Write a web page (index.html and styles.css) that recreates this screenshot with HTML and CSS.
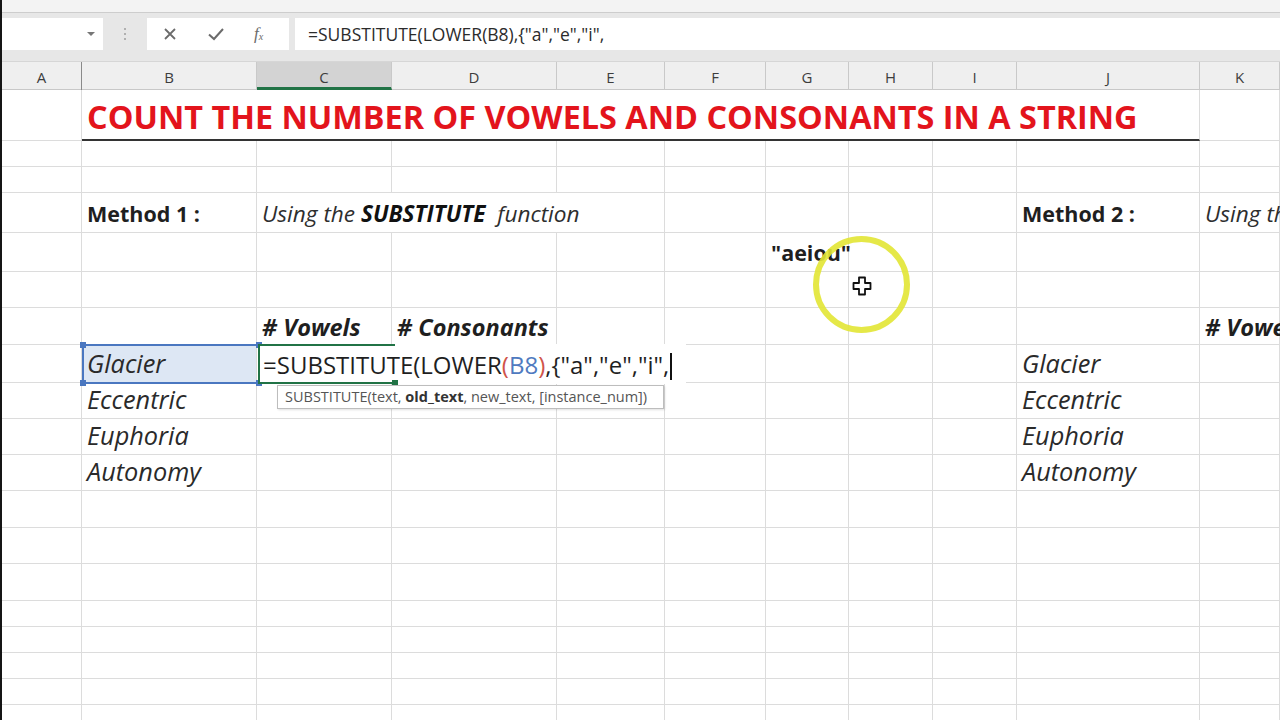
FILE: index.html
```html
<!DOCTYPE html>
<html>
<head>
<meta charset="utf-8">
<link rel="stylesheet" href="styles.css">
</head>
<body>
<div class="app">
  <div class="ribbon-edge"></div>
  <div class="formula-bar">
    <div class="name-box"><span class="caret-down"></span></div>
    <div class="fb-sep"><i></i><i></i><i></i></div>
    <div class="fb-buttons">
      <svg class="fb-icon" width="16" height="16" viewBox="0 0 16 16"><path d="M3 3 L13 13 M13 3 L3 13" stroke="#6b6b6b" stroke-width="1.8" fill="none"/></svg>
      <svg class="fb-icon" width="18" height="16" viewBox="0 0 18 16"><path d="M2 8.5 L7 13 L16 3" stroke="#6b6b6b" stroke-width="2" fill="none"/></svg>
      <span class="fx">f<sub>x</sub></span>
    </div>
    <div class="fb-input">=SUBSTITUTE(LOWER(B8),{"a","e","i",</div>
  </div>
  <div class="col-headers">
    <div class="ch">A</div><div class="ch">B</div><div class="ch active">C</div><div class="ch">D</div><div class="ch">E</div><div class="ch">F</div><div class="ch">G</div><div class="ch">H</div><div class="ch">I</div><div class="ch">J</div><div class="ch">K</div>
  </div>
  <div class="sheet">
    <!-- row 1 -->
    <div class="c"></div><div class="c title">COUNT THE NUMBER OF VOWELS AND CONSONANTS IN A STRING</div><div class="c"></div>
    <!-- row 2 -->
    <div class="c"></div><div class="c"></div><div class="c"></div><div class="c"></div><div class="c"></div><div class="c"></div><div class="c"></div><div class="c"></div><div class="c"></div><div class="c"></div><div class="c"></div>
    <!-- row 3 -->
    <div class="c"></div><div class="c"></div><div class="c"></div><div class="c"></div><div class="c"></div><div class="c"></div><div class="c"></div><div class="c"></div><div class="c"></div><div class="c"></div><div class="c"></div>
    <!-- row 4 -->
    <div class="c"></div><div class="c b">Method 1 :</div><div class="c u span3">Using the&nbsp; <b>SUBSTITUTE</b>&nbsp; function</div><div class="c"></div><div class="c"></div><div class="c"></div><div class="c"></div><div class="c b">Method 2 :</div><div class="c u">Using the&nbsp; <b>SUBSTITUTE</b></div>
    <!-- row 5 -->
    <div class="c"></div><div class="c"></div><div class="c"></div><div class="c"></div><div class="c"></div><div class="c"></div><div class="c b ov">"aeiou"</div><div class="c"></div><div class="c"></div><div class="c"></div><div class="c"></div>
    <!-- row 6 -->
    <div class="c"></div><div class="c"></div><div class="c"></div><div class="c"></div><div class="c"></div><div class="c"></div><div class="c"></div><div class="c"></div><div class="c"></div><div class="c"></div><div class="c"></div>
    <!-- row 7 -->
    <div class="c"></div><div class="c"></div><div class="c bi">#&nbsp;Vowels</div><div class="c bi">#&nbsp;Consonants</div><div class="c"></div><div class="c"></div><div class="c"></div><div class="c"></div><div class="c"></div><div class="c"></div><div class="c bi">#&nbsp;Vowels</div>
    <!-- row 8 -->
    <div class="c"></div><div class="c i sel">Glacier</div><div class="c"></div><div class="c"></div><div class="c"></div><div class="c"></div><div class="c"></div><div class="c"></div><div class="c"></div><div class="c i">Glacier</div><div class="c"></div>
    <!-- row 9 -->
    <div class="c"></div><div class="c i">Eccentric</div><div class="c"></div><div class="c"></div><div class="c"></div><div class="c"></div><div class="c"></div><div class="c"></div><div class="c"></div><div class="c i">Eccentric</div><div class="c"></div>
    <!-- row 10 -->
    <div class="c"></div><div class="c i">Euphoria</div><div class="c"></div><div class="c"></div><div class="c"></div><div class="c"></div><div class="c"></div><div class="c"></div><div class="c"></div><div class="c i">Euphoria</div><div class="c"></div>
    <!-- row 11 -->
    <div class="c"></div><div class="c i">Autonomy</div><div class="c"></div><div class="c"></div><div class="c"></div><div class="c"></div><div class="c"></div><div class="c"></div><div class="c"></div><div class="c i">Autonomy</div><div class="c"></div>
    <!-- rows 12-19 -->
    <div class="c"></div><div class="c"></div><div class="c"></div><div class="c"></div><div class="c"></div><div class="c"></div><div class="c"></div><div class="c"></div><div class="c"></div><div class="c"></div><div class="c"></div>
    <div class="c"></div><div class="c"></div><div class="c"></div><div class="c"></div><div class="c"></div><div class="c"></div><div class="c"></div><div class="c"></div><div class="c"></div><div class="c"></div><div class="c"></div>
    <div class="c"></div><div class="c"></div><div class="c"></div><div class="c"></div><div class="c"></div><div class="c"></div><div class="c"></div><div class="c"></div><div class="c"></div><div class="c"></div><div class="c"></div>
    <div class="c"></div><div class="c"></div><div class="c"></div><div class="c"></div><div class="c"></div><div class="c"></div><div class="c"></div><div class="c"></div><div class="c"></div><div class="c"></div><div class="c"></div>
    <div class="c"></div><div class="c"></div><div class="c"></div><div class="c"></div><div class="c"></div><div class="c"></div><div class="c"></div><div class="c"></div><div class="c"></div><div class="c"></div><div class="c"></div>
    <div class="c"></div><div class="c"></div><div class="c"></div><div class="c"></div><div class="c"></div><div class="c"></div><div class="c"></div><div class="c"></div><div class="c"></div><div class="c"></div><div class="c"></div>
    <div class="c"></div><div class="c"></div><div class="c"></div><div class="c"></div><div class="c"></div><div class="c"></div><div class="c"></div><div class="c"></div><div class="c"></div><div class="c"></div><div class="c"></div>
    <div class="c"></div><div class="c"></div><div class="c"></div><div class="c"></div><div class="c"></div><div class="c"></div><div class="c"></div><div class="c"></div><div class="c"></div><div class="c"></div><div class="c"></div>
  </div>

  <div class="sel-box"><i class="h tl"></i><i class="h tr"></i><i class="h bl"></i><i class="h br"></i></div>
  <div class="editor">
    <div class="editor-frame"><i class="fill-handle"></i></div>
    <span class="editor-text">=SUBSTITUTE(LOWER<span class="paren">(</span><span class="ref">B8</span><span class="paren">)</span>,{"a","e","i",<span class="caret"></span></span>
  </div>
  <div class="tooltip">SUBSTITUTE(text, <b>old_text</b>, new_text, [instance_num])</div>
  <div class="ring"></div>
  <svg class="cursor" width="20" height="20" viewBox="0 0 20 20"><path d="M7 1.5 H13 V7 H18.5 V13 H13 V18.5 H7 V13 H1.5 V7 H7 Z" fill="#fff" stroke="#111" stroke-width="1.8" stroke-linejoin="round"/></svg>
</div>
</body>
</html>
```

FILE: styles.css
```css
* { box-sizing: border-box; }
html, body { margin: 0; padding: 0; background: #fff; }
body { width: 1280px; height: 720px; overflow: hidden; font-family: "Open Sans", "Noto Sans", sans-serif; color: #1f1f1f; }

.app { position: relative; width: 1280px; height: 720px; overflow: hidden; border-left: 2px solid #151515; }

.ribbon-edge { height: 13px; background: #f3f3f3; border-bottom: 1px solid #cdcdcd; }

.formula-bar {
  height: 48px;
  background: #e7e7e7;
  display: flex;
  align-items: flex-start;
  padding-top: 5px;
}
.name-box {
  width: 101px; height: 32px; background: #fff;
  display: flex; align-items: center; justify-content: flex-end; padding-right: 8px;
}
.caret-down { width: 0; height: 0; border-left: 4px solid transparent; border-right: 4px solid transparent; border-top: 4px solid #777; }
.fb-sep { width: 44px; height: 32px; display: flex; flex-direction: column; align-items: center; justify-content: center; gap: 3px; }
.fb-sep i { width: 2px; height: 2px; background: #b0b0b0; display: block; }
.fb-buttons {
  width: 142px; height: 32px; background: #fff;
  display: flex; align-items: center; padding-left: 15px; gap: 29px;
}
.fx { font-family: "Liberation Serif", serif; font-style: italic; font-size: 17px; color: #6b6b6b; }
.fx sub { font-size: 10px; vertical-align: -1px; }
.fb-input {
  flex: 1; margin-left: 6px; height: 32px; background: #fff;
  font-size: 17.5px; color: #2b2b2b; padding-left: 13px; line-height: 32px;
}

.col-headers {
  height: 29px;
  background: #efefef;
  border-top: 1px solid #d6d6d6;
  border-bottom: 1px solid #c8c8c8;
  display: grid;
  grid-template-columns: 80px 175px 135px 165px 108px 101px 83px 84px 84px 183px 80px;
}
.ch {
  border-right: 1px solid #c9c9c9;
  display: flex; align-items: center; justify-content: center;
  font-size: 15px; color: #3d3d3d; padding-top: 2px;
}
.ch:first-child { border-right-color: #8a8a8a; }
.ch.active { background: #d3d3d3; border-bottom: 3px solid #217346; padding-top: 5px; }

.sheet {
  display: grid;
  grid-template-columns: 80px 175px 135px 165px 108px 101px 83px 84px 84px 183px 80px;
  grid-template-rows: 51px 26px 26px 40px 39px 36px 37px 38px 36px 36px 36px 37px 36px 37px 26px 26px 26px 26px 26px;
}
.c {
  border-right: 1px solid #dcdcdc;
  border-bottom: 1px solid #dcdcdc;
  display: flex; align-items: flex-end;
  padding: 0 0 5px 5px;
  font-size: 20px; line-height: 1.2;
  white-space: nowrap;
  min-width: 0;
}
.c.title {
  grid-column: span 9;
  border-bottom: 2px solid #333;
  color: #e3141c; font-weight: 700; font-size: 32.4px;
  padding-bottom: 3px; padding-left: 5px;
}
.c.span3 { grid-column: span 3; }
.c.b { font-weight: 700; font-size: 21.5px; }
.c.u { font-style: italic; color: #2e2e2e; font-size: 22.6px; }
.c.u b { font-weight: 700; color: #111; }
.c.i { font-style: italic; color: #2a2a2a; font-size: 25.3px; padding-bottom: 4px; }
.c.bi { font-weight: 700; font-style: italic; font-size: 23.5px; padding-bottom: 3px; }
.c.ov { overflow: visible; }
.c.sel { background: #dde7f4; }

.sel-box {
  position: absolute; left: 80px; top: 344px; width: 178px; height: 40px;
  border: 2px solid #4a77c0;
}
.h { position: absolute; width: 6px; height: 6px; background: #4a77c0; }
.h.tl { left: -4px; top: -4px; }
.h.tr { right: -4px; top: -4px; }
.h.bl { left: -4px; bottom: -4px; }
.h.br { right: -4px; bottom: -4px; }

.editor {
  position: absolute; left: 256px; top: 344px; width: 428px; height: 40px;
  background: #fff;
}
.editor-frame {
  position: absolute; left: 0; top: 0; width: 137px; height: 40px;
  border: 2px solid #217346; border-right: none;
}
.fill-handle { position: absolute; right: -3px; bottom: -4px; width: 6px; height: 6px; background: #217346; }
.editor-text {
  position: absolute; left: 5px; bottom: 4px;
  font-size: 24px; line-height: 1.2; color: #1f1f1f; white-space: nowrap;
}
.paren { color: #d0544a; }
.ref { color: #4f7ac0; }
.caret { display: inline-block; width: 1.5px; height: 27px; background: #111; vertical-align: -6px; margin-left: 1px; }

.tooltip {
  position: absolute; left: 275px; top: 385px; width: 387px; height: 24px;
  background: #fff; border: 1px solid #bdbdbd;
  box-shadow: 1px 1px 2px rgba(0,0,0,0.12);
  font-size: 14.5px; color: #555; line-height: 22px; padding-left: 7px; white-space: nowrap;
}
.tooltip b { color: #333; }

.ring {
  position: absolute; left: 811px; top: 236px; width: 97px; height: 97px;
  border-radius: 50%; border: 6px solid rgba(226, 230, 52, 0.9);
}
.cursor { position: absolute; left: 850px; top: 276px; }
```
